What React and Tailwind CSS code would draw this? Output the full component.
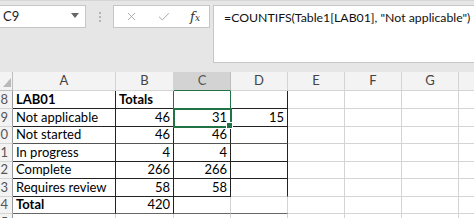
import { Check, X } from "lucide-react";

const cols = [
  { key: "A", w: "w-[103px]" },
  { key: "B", w: "w-[58px]" },
  { key: "C", w: "w-[57px]" },
  { key: "D", w: "w-[57px]" },
  { key: "E", w: "w-[57px]" },
  { key: "F", w: "w-[57px]" },
  { key: "G", w: "w-[57px]" },
  { key: "H", w: "w-[57px]" },
];

// cell = [text, align, bold, borderClasses]
const rows = [
  {
    n: "8",
    h: "h-[18px]",
    cells: [
      ["LAB01", "l", true, "border-r-[#222] border-b-[#222]"],
      ["Totals", "l", true, "border-r-[#217346] border-b-[#222]"],
      ["", "r", false, "border-r-[#217346] border-b-[#217346]"],
      ["", "r", false, "border-r-[#222] border-b-[#222]"],
    ],
  },
  {
    n: "9",
    h: "h-[18px]",
    active: true,
    cells: [
      ["Not applicable", "l", false, "border-r-[#222] border-b-[#222]"],
      ["46", "r", false, "border-r-[#217346] border-b-[#222]"],
      ["31", "r", false, "border-r-[#217346] border-b-[#217346]"],
      ["15", "r", false, "border-r-[#222] border-b-[#222]"],
    ],
  },
  {
    n: "10",
    h: "h-[17px]",
    cells: [
      ["Not started", "l", false, "border-r-[#222] border-b-[#555]"],
      ["46", "r", false, "border-r-[#222] border-b-[#555]"],
      ["46", "r", false, "border-r-[#222] border-b-[#555]"],
      ["", "r", false, "border-r-[#222] border-b-[#555]"],
    ],
  },
  {
    n: "11",
    h: "h-[18px]",
    cells: [
      ["In progress", "l", false, "border-r-[#222] border-b-[#222]"],
      ["4", "r", false, "border-r-[#222] border-b-[#222]"],
      ["4", "r", false, "border-r-[#222] border-b-[#222]"],
      ["", "r", false, "border-r-[#222] border-b-[#222]"],
    ],
  },
  {
    n: "12",
    h: "h-[17px]",
    cells: [
      ["Complete", "l", false, "border-r-[#222] border-b-[#222]"],
      ["266", "r", false, "border-r-[#222] border-b-[#222]"],
      ["266", "r", false, "border-r-[#222] border-b-[#222]"],
      ["", "r", false, "border-r-[#222] border-b-[#222]"],
    ],
  },
  {
    n: "13",
    h: "h-[18px]",
    cells: [
      ["Requires review", "l", false, "border-r-[#222] border-b-[#222]"],
      ["58", "r", false, "border-r-[#222] border-b-[#222]"],
      ["58", "r", false, "border-r-[#222] border-b-[#222]"],
      ["", "r", false, "border-r-[#222] border-b-[#d4d4d4]"],
    ],
  },
  {
    n: "14",
    h: "h-[17px]",
    cells: [
      ["Total", "l", true, "border-r-[#222] border-b-[#666]"],
      ["420", "r", false, "border-r-[#222] border-b-[#666]"],
      ["", "r", false, "border-r-[#d4d4d4] border-b-[#666]"],
      ["", "r", false, "border-r-[#d4d4d4] border-b-[#666]"],
    ],
  },
  { n: "15", h: "h-[18px]", cells: [] },
];

function Cell({ w, cell }) {
  const [text, align, bold, borders] = cell || ["", "l", false, "border-r-[#d4d4d4] border-b-[#d4d4d4]"];
  return (
    <div
      className={`${w} shrink-0 h-full border-r border-b ${borders} flex items-center px-[3px] whitespace-nowrap overflow-hidden ${
        align === "r" ? "justify-end" : "justify-start"
      } ${bold ? "font-bold" : ""}`}
    >
      {text}
    </div>
  );
}

export default function App() {
  return (
    <div className="w-[474px] h-[218px] overflow-hidden bg-white font-['Lato','Liberation_Sans',sans-serif] text-[13px] text-black">
      {/* Formula bar area */}
      <div className="h-[72px] bg-[#e6e6e6] border-t border-[#d6d6d6] flex items-start pt-[4px]">
        <div className="w-[86px] h-[23px] shrink-0 bg-white border border-l-0 border-[#c6c6c6] flex items-center justify-between pl-[3px] pr-[6px] text-[13px] text-[#222]">
          <span>C9</span>
          <svg width="8" height="5" viewBox="0 0 8 5" className="mb-[3px]">
            <path d="M0 0h8L4 5z" fill="#666" />
          </svg>
        </div>
        <div className="w-[27px] h-[23px] shrink-0 flex flex-col items-center justify-center gap-[2px]">
          <span className="w-[2px] h-[2px] bg-[#b5b5b5]" />
          <span className="w-[2px] h-[2px] bg-[#b5b5b5]" />
          <span className="w-[2px] h-[2px] bg-[#b5b5b5]" />
        </div>
        <div className="w-[97px] h-[23px] shrink-0 bg-white border border-[#c6c6c6] flex items-center pl-[11px] pr-[9px] justify-between">
          <X size={13} strokeWidth={1.5} color="#9a9a9a" />
          <Check size={14} strokeWidth={1.5} color="#9a9a9a" />
          <span className="font-['DejaVu_Serif',serif] italic text-[13px] text-[#333] leading-none">
            f<span className="text-[9px]">x</span>
          </span>
        </div>
        <div className="ml-[3px] flex-1 h-[58px] bg-white border border-r-0 border-[#c6c6c6] pl-[10px] pt-[3px] text-[12.3px] text-[#111] whitespace-nowrap">
          =COUNTIFS(Table1[LAB01], "Not applicable")
        </div>
      </div>

      {/* Column headers */}
      <div className="flex h-[19px] bg-[#f3f3f3] text-[#444] text-[13px]">
        <div className="w-[13px] shrink-0 h-full border-r border-b border-[#bdbdbd] flex items-end justify-end pb-[3px] pr-px">
          <svg width="8" height="9" viewBox="0 0 8 9">
            <path d="M8 0v9H0z" fill="#b9b9b9" />
          </svg>
        </div>
        {cols.map((c) => (
          <div
            key={c.key}
            className={`${c.w} shrink-0 h-full border-r border-b flex items-center justify-center ${
              c.key === "C" ? "bg-[#d3d3d3] border-b-[#217346] border-r-[#bdbdbd] text-[#555]" : "border-[#d4d4d4]"
            }`}
          >
            {c.key}
          </div>
        ))}
      </div>

      {/* Rows */}
      {rows.map((r) => (
        <div key={r.n} className={`flex ${r.h}`}>
          <div className="w-[13px] shrink-0 h-full bg-[#f3f3f3] border-r border-b border-r-[#9a9a9a] border-b-[#d4d4d4] overflow-hidden">
            <div className="w-[40px] -ml-[27px] h-full flex items-center justify-end pr-[5px] text-[13px] text-[#555] whitespace-nowrap">
              {r.n}
            </div>
          </div>
          {cols.map((c, i) =>
            r.active && c.key === "C" ? (
              <div
                key={c.key}
                className={`${c.w} shrink-0 h-full relative flex items-center justify-end px-[3px] border-r border-b border-[#217346] outline-2 outline-[#217346] -outline-offset-1`}
              >
                {r.cells[i][0]}
                <span className="absolute -right-[3px] -bottom-[3px] w-[5px] h-[5px] bg-[#217346] border border-white box-content" />
              </div>
            ) : (
              <Cell key={c.key} w={c.w} cell={r.cells[i]} />
            )
          )}
        </div>
      ))}
    </div>
  );
}
